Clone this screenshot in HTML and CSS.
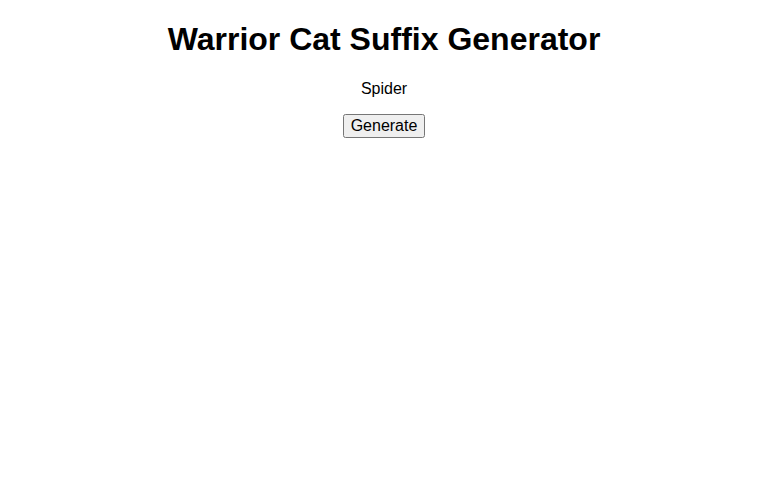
FILE: index.html
```html
<!DOCTYPE html>
<html>
<head>
<meta charset="utf-8">
<link rel="stylesheet" href="styles.css">
</head>
<body class="page">
<h1 class="title">Warrior Cat Suffix Generator</h1>
<p class="suffix">Spider</p>
<p class="actions"><button class="gen-btn">Generate</button></p>
</body>
</html>
```
FILE: styles.css
```css
.page {
  margin: 0;
  font-family: "Liberation Sans", Arial, sans-serif;
  text-align: center;
  background: #fff;
  color: #000;
}
.title {
  font-size: 32px;
  font-weight: bold;
  margin: 21.44px 0;
}
.suffix {
  font-size: 16px;
  margin: 16px 0;
}
.actions {
  margin: 16px 0;
}
.gen-btn {
  font-family: "Liberation Sans", Arial, sans-serif;
  font-size: 16px;
}
```
